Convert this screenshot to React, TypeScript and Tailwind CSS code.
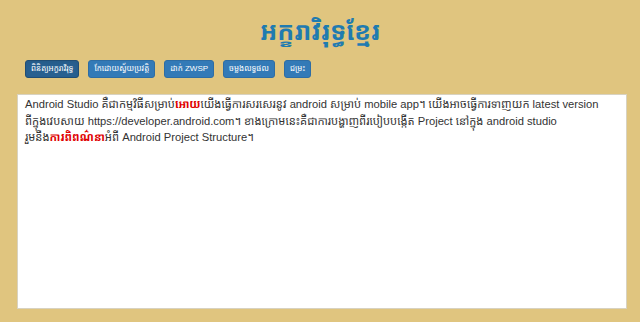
import React from 'react';

const khmer = '"Liberation Sans", "Noto Sans Khmer", "Khmer OS", sans-serif';

const buttons = ['ពិនិត្យអក្ខរាវិរុទ្ធ', 'កែដោយស្វ័យប្រវត្តិ', 'ដាក់ ZWSP', 'ចម្លងលទ្ធផល', 'ជម្រះ'];

export default function App() {
  return (
    <div className="w-[640px] h-[322px] bg-[#e0c57f] overflow-hidden" style={{ fontFamily: khmer }}>
      <h1 className="pt-[14px] h-[60px] text-center text-[25px] font-bold text-[#1f7bb0] leading-[34px]">
        អក្ខរាវិរុទ្ធខ្មែរ
      </h1>
      <div className="flex gap-[9px] pl-[25px] h-[18px]">
        {buttons.map((b, i) => (
          <button
            key={b}
            className={`h-[18px] px-[5px] rounded-[3px] text-[8px] leading-[16px] text-white border ${
              i === 0 ? 'bg-[#286090] border-[#204d74] shadow-inner' : 'bg-[#337ab7] border-[#2e6da4]'
            }`}
          >
            {b}
          </button>
        ))}
      </div>
      <div className="ml-[17px] mt-[16px] w-[610px] h-[215px] bg-white border border-[#d8d2c0] px-[7px] py-[1px] text-[11.2px] leading-[16.5px] text-[#333]">
        Android Studio គឺជាកម្មវិធីសម្រាប់
        <span className="text-[#e00000] font-bold">អោយ</span>
        យើងធ្វើការសរសេរនូវ android សម្រាប់ mobile app។ យើងអាចធ្វើការទាញយក latest version
        <br />
        ពីក្នុងវេបសាយ https://developer.android.com។ ខាងក្រោមនេះគឺជាការបង្ហាញពីរបៀបបង្កើត Project នៅក្នុង android studio
        <br />
        រួមនឹង<span className="text-[#e00000] font-bold">ការពិពណ៌នា</span>អំពី Android Project Structure។
      </div>
    </div>
  );
}
